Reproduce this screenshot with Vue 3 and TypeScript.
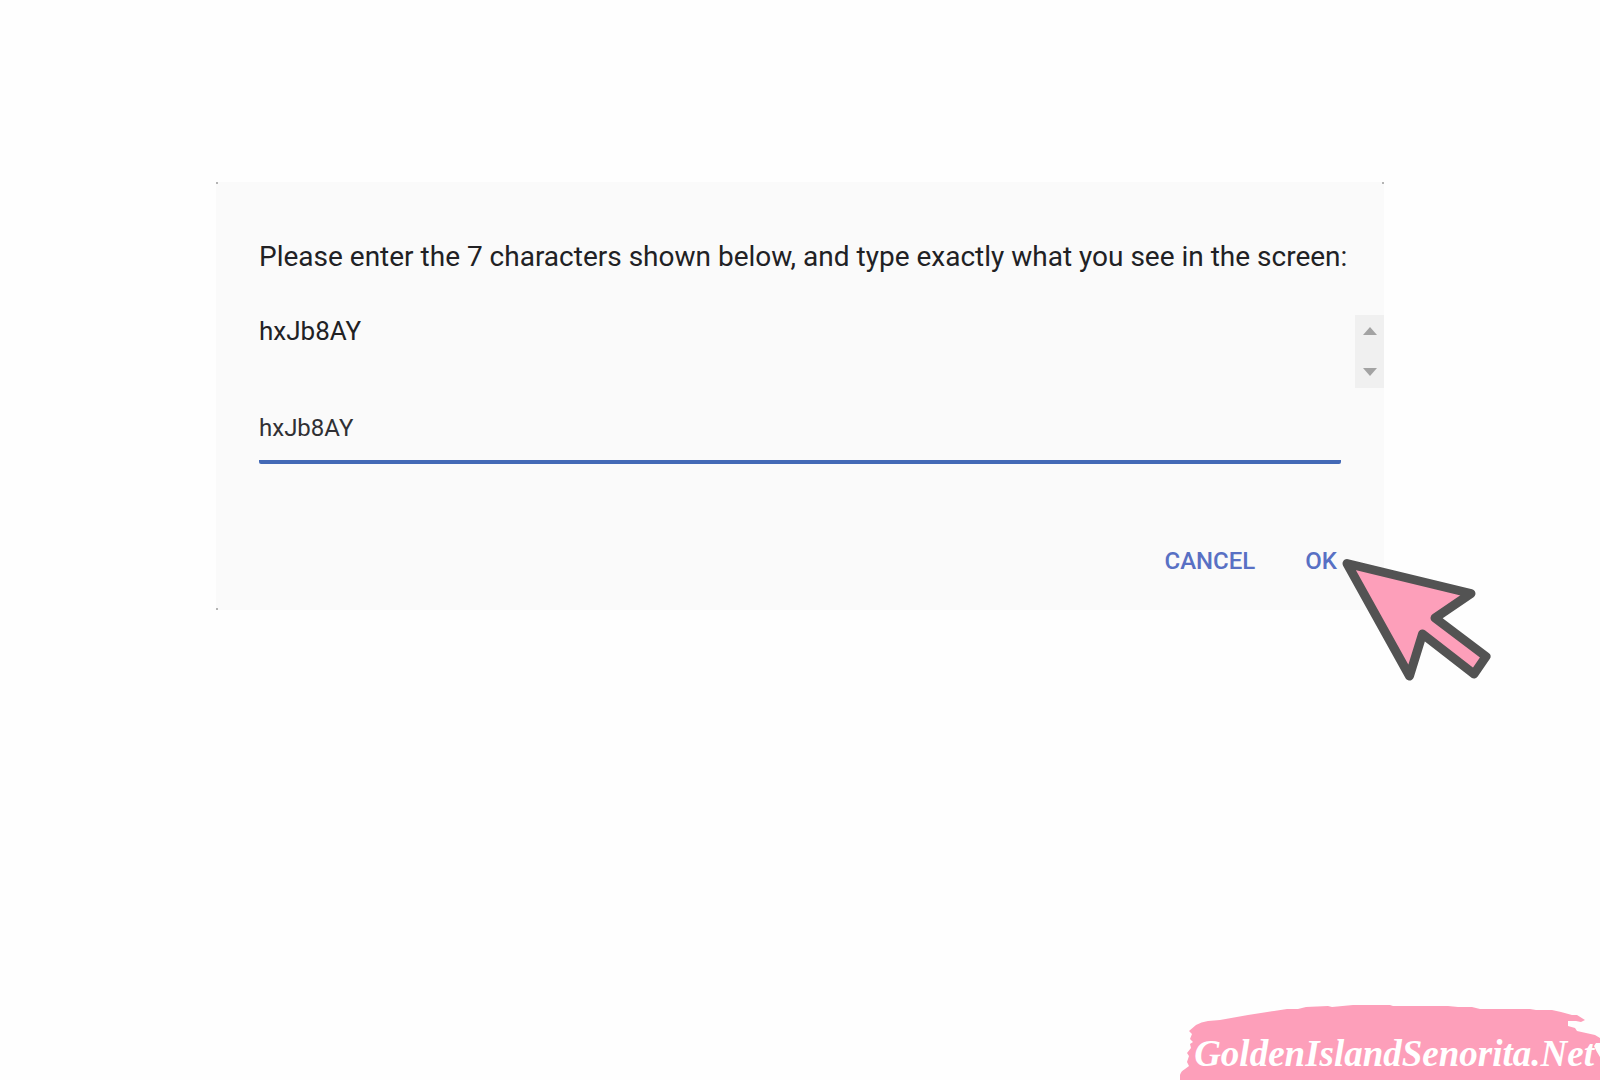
<script setup lang="ts">
import { ref } from 'vue'

const code = 'hxJb8AY'
const typed = ref(code)
</script>

<template>
  <main class="page">
    <form class="dialog" role="dialog" aria-labelledby="prompt" @submit.prevent>
      <label id="prompt" class="prompt" for="answer">Please enter the 7 characters shown below, and type exactly what you see in the screen:</label>

      <div class="code-row">
        <p class="code">{{ code }}</p>
        <div class="scroller">
          <button type="button" class="step" aria-label="Scroll up">
            <svg width="14" height="8" viewBox="0 0 14 8"><path d="M7 0 14 8H0z" /></svg>
          </button>
          <button type="button" class="step" aria-label="Scroll down">
            <svg width="14" height="8" viewBox="0 0 14 8"><path d="M0 0H14L7 8z" /></svg>
          </button>
        </div>
      </div>

      <input id="answer" v-model="typed" class="answer" type="text" autocomplete="off" spellcheck="false" />

      <div class="actions">
        <button type="button" class="action">CANCEL</button>
        <button type="submit" class="action">OK</button>
      </div>

      <svg class="pointer" width="156" height="128" viewBox="0 0 156 128" aria-hidden="true">
        <path d="M7 7.500 131 37.500 95 62 146 100.500 134 118 82.500 78 69.500 120z" />
      </svg>
    </form>

    <footer class="brand">
      <svg class="brush" viewBox="0 0 424 80" preserveAspectRatio="none" aria-hidden="true">
        <path
          d="M4 80 4 75Q5 71 9 69L13 66 11 62 13 56 11 53 15 48 14 44 17 42 14 39 16 34 13 31 20 25Q25 22 32 21L44 20 72 15 98 11 111 9 122 9 130 7 152 6 156 7 177 5H214L217 6H272L282 7 296 7 304 9H354L360 10 376 10 385 12 396 15 401 15 409 20 405 22 400 21 392 21V26L399 28 401 31 410 33 419 35 424 38V43L420 43 418 46 421 52 424 57V80z"
        />
      </svg>
      <span class="brand-name">GoldenIslandSenorita.Net</span>
    </footer>
  </main>
</template>

<style>
body {
  margin: 0;
  background: #fefefe;
}
</style>

<style scoped>
.page {
  position: relative;
  box-sizing: border-box;
  min-height: 100vh;
  padding-top: 182px;
  overflow: hidden;
  font-family: Roboto, "Liberation Sans", sans-serif;
  color: #212124;
}

.dialog {
  position: relative;
  display: flex;
  flex-direction: column;
  box-sizing: border-box;
  width: 73%;
  margin: 0 auto;
  padding: 55px 43px 35px;
  background:
    linear-gradient(#b4b4b4, #b4b4b4) left top / 2px 2px no-repeat,
    linear-gradient(#b4b4b4, #b4b4b4) right top / 2px 2px no-repeat,
    linear-gradient(#b4b4b4, #b4b4b4) left bottom / 2px 2px no-repeat,
    #fafafa;
}

.prompt {
  margin-right: -16px;
  font-size: 28px;
  line-height: 40px;
}

.code-row {
  display: flex;
  justify-content: space-between;
  margin: 38px -43px 0 0;
}

.code {
  margin: 0;
  font-size: 26px;
  line-height: 32px;
}

.scroller {
  display: flex;
  flex-direction: column;
  justify-content: space-between;
  box-sizing: border-box;
  width: 29px;
  height: 73px;
  padding: 8px 0;
  background: #f0f0f0;
}

.step {
  display: flex;
  align-items: center;
  justify-content: center;
  height: 16px;
  padding: 0;
  border: 0;
  background: none;
}

.step path {
  fill: #a3a3a3;
}

.answer {
  height: 28px;
  margin-top: 26px;
  padding: 0 0 18px;
  border: 0;
  border-bottom: 4px solid #4369b6;
  border-radius: 2px;
  outline: 0;
  background: none;
  font: 400 24px/28px Roboto, "Liberation Sans", sans-serif;
  color: #303034;
}

.actions {
  display: flex;
  justify-content: flex-end;
  gap: 50px;
  margin-top: 83px;
  padding-right: 4px;
}

.action {
  padding: 0;
  border: 0;
  background: none;
  font: 500 24px/28px Roboto, "Liberation Sans", sans-serif;
  color: #5870c4;
}

.pointer {
  position: absolute;
  right: -112px;
  bottom: -74px;
}

.pointer path {
  fill: #fd9fba;
  stroke: #535353;
  stroke-width: 9px;
  stroke-linejoin: round;
}

.brand {
  position: absolute;
  right: 0;
  bottom: 0;
  display: flex;
  align-items: flex-end;
  justify-content: flex-end;
  box-sizing: border-box;
  width: 424px;
  height: 80px;
  padding: 0 6px 4px 0;
}

.brush {
  position: absolute;
  inset: 0;
  width: 100%;
  height: 100%;
  fill: #fd9fba;
}

.brand-name {
  position: relative;
  font: italic 700 37px/44px "Liberation Serif", cursive;
  white-space: nowrap;
  color: #fff;
}
</style>
